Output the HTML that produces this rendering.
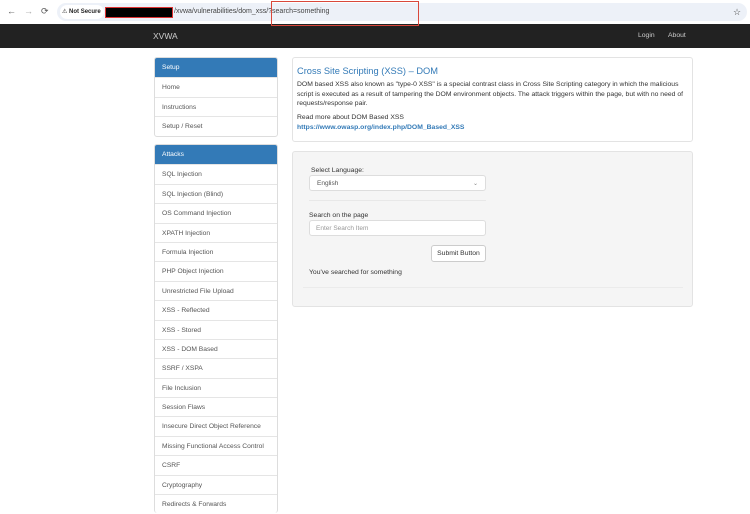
<!DOCTYPE html>
<html><head><meta charset="utf-8"><style>
*{box-sizing:border-box;margin:0;padding:0}
body{width:750px;height:510px;overflow:hidden;background:#fff;font-family:"Liberation Sans",sans-serif;font-size:7px;color:#333;position:relative}
.abs{position:absolute}
.bar{left:0;top:0;width:750px;height:24px;background:#fff}
.url{left:57px;top:3px;width:690px;height:18px;background:#edf1f8;border-radius:9px}
.nav{left:0;top:24px;width:750px;height:24px;background:#222}
.list{left:154px;width:124px;border:1px solid #ddd;border-radius:3px;background:#fff}
.list div{height:19.4px;line-height:19px;padding-left:7px;border-top:1px solid #e5e5e5;font-size:6.7px;color:#555}
.list div.h{background:#337ab7;color:#fff;border-top:none;border-radius:2px 2px 0 0}
</style></head><body>
<div class="abs bar"></div>
<div class="abs" style="left:7px;top:6px;font-size:9px;color:#555">←</div>
<div class="abs" style="left:24px;top:6px;font-size:9px;color:#aaa">→</div>
<div class="abs" style="left:41px;top:6px;font-size:9px;color:#555">⟳</div>
<div class="abs url"></div>
<div class="abs" style="left:60px;top:5px;width:44px;height:14px;background:#fff;border-radius:7px"></div>
<div class="abs" style="left:62px;top:8px;font-size:6px;color:#222">⚠ <b>Not Secure</b></div>
<div class="abs" style="left:105px;top:7px;width:68px;height:11px;background:#000;border:1px solid #d33"></div>
<div class="abs" style="left:174px;top:8px;font-size:7px;color:#444">/xvwa/vulnerabilities/dom_xss/?search=something</div>
<div class="abs nav"></div>
<div class="abs" style="left:271px;top:1px;width:148px;height:25px;border:1.5px solid #d9483b"></div>
<div class="abs" style="left:733px;top:7px;font-size:9px;color:#444">☆</div>
<div class="abs" style="left:153px;top:31px;font-size:8.5px;color:#ccc">XVWA</div>
<div class="abs" style="left:638px;top:32px;font-size:6.8px;color:#ccc">Login</div>
<div class="abs" style="left:668px;top:32px;font-size:6.8px;color:#ccc">About</div>

<div class="abs list" style="top:57px">
<div class="h">Setup</div><div>Home</div><div>Instructions</div><div>Setup / Reset</div></div>
<div class="abs list" style="top:144px;border-bottom:none">
<div class="h">Attacks</div><div>SQL Injection</div><div>SQL Injection (Blind)</div><div>OS Command Injection</div><div>XPATH Injection</div><div>Formula Injection</div><div>PHP Object Injection</div><div>Unrestricted File Upload</div><div>XSS - Reflected</div><div>XSS - Stored</div><div>XSS - DOM Based</div><div>SSRF / XSPA</div><div>File Inclusion</div><div>Session Flaws</div><div>Insecure Direct Object Reference</div><div>Missing Functional Access Control</div><div>CSRF</div><div>Cryptography</div><div>Redirects &amp; Forwards</div></div>

<div class="abs" style="left:292px;top:57px;width:401px;height:85px;border:1px solid #e3e3e3;border-radius:3px"></div>
<div class="abs" style="left:297px;top:66px;font-size:9.3px;color:#337ab7">Cross Site Scripting (XSS) – DOM</div>
<div class="abs" style="left:297px;top:80px;width:392px;font-size:6.8px;line-height:9.5px;color:#333">DOM based XSS also known as "type-0 XSS" is a special contrast class in Cross Site Scripting category in which the malicious script is executed as a result of tampering the DOM environment objects. The attack triggers within the page, but with no need of requests/response pair.</div>
<div class="abs" style="left:297px;top:113px;font-size:6.8px;line-height:9.5px">Read more about DOM Based XSS<br><b style="color:#337ab7">https://www.owasp.org/index.php/DOM_Based_XSS</b></div>

<div class="abs" style="left:292px;top:151px;width:401px;height:156px;background:#f5f5f5;border:1px solid #e3e3e3;border-radius:3px"></div>
<div class="abs" style="left:311px;top:167px;font-size:6.8px">Select Language:</div>
<div class="abs" style="left:309px;top:175px;width:177px;height:16px;background:#fff;border:1px solid #ddd;border-radius:3px;font-size:6.5px;color:#555;padding:4px 7px">English<span style="float:right;font-size:6px;color:#888">⌄</span></div>
<div class="abs" style="left:309px;top:200px;width:177px;height:1px;background:#e8e8e8"></div>
<div class="abs" style="left:309px;top:212px;font-size:6.8px">Search on the page</div>
<div class="abs" style="left:309px;top:220px;width:177px;height:16px;background:#fff;border:1px solid #ddd;border-radius:3px;font-size:6.5px;color:#999;padding:4px 6px">Enter Search Item</div>
<div class="abs" style="left:431px;top:245px;width:55px;height:17px;background:#fff;border:1px solid #ccc;border-radius:3px;font-size:6.8px;text-align:center;line-height:15px">Submit Button</div>
<div class="abs" style="left:309px;top:269px;font-size:6.8px">You've searched for something</div>
<div class="abs" style="left:303px;top:287px;width:380px;height:1px;background:#ebebeb"></div>
</body></html>
